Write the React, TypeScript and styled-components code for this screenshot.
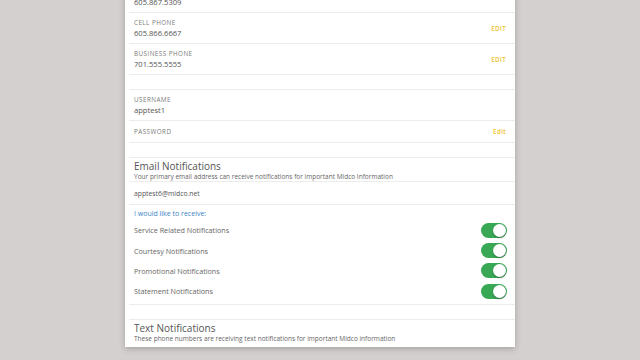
import styled, { createGlobalStyle } from 'styled-components'

const GlobalStyle = createGlobalStyle`
  html, body {
    margin: 0;
    padding: 0;
    background: #d4d0cf;
    height: 360px;
    overflow: hidden;
  }
  body {
    font-family: 'Open Sans', 'Liberation Sans', sans-serif;
  }
`

type Field = { label: string; value?: string; edit?: string }

const phoneFields: Field[] = [
  { label: 'HOME PHONE', value: '605.867.5309' },
  { label: 'CELL PHONE', value: '605.866.6667', edit: 'EDIT' },
  { label: 'BUSINESS PHONE', value: '701.555.5555', edit: 'EDIT' },
]

const loginFields: Field[] = [
  { label: 'USERNAME', value: 'apptest1' },
  { label: 'PASSWORD', edit: 'Edit' },
]

const notifications = [
  'Service Related Notifications',
  'Courtesy Notifications',
  'Promotional Notifications',
  'Statement Notifications',
]

export default function App() {
  return (
    <>
      <GlobalStyle />
      <Page>
        <Panel>
          {phoneFields.map((f) => (
            <FieldRow key={f.label}>
              <FieldText>
                <Label>{f.label}</Label>
                <Value>{f.value}</Value>
              </FieldText>
              {f.edit && <EditLink>{f.edit}</EditLink>}
            </FieldRow>
          ))}
          <Spacer />
          {loginFields.map((f) => (
            <FieldRow key={f.label} short={!f.value}>
              <FieldText>
                <Label>{f.label}</Label>
                {f.value && <Value>{f.value}</Value>}
              </FieldText>
              {f.edit && <EditLink>{f.edit}</EditLink>}
            </FieldRow>
          ))}
          <Spacer />

          <SectionHead>
            <Heading>Email Notifications</Heading>
            <SubText>Your primary email address can receive notifications for important Midco Information</SubText>
          </SectionHead>
          <EmailRow>apptest6@midco.net</EmailRow>

          <Prefs>
            <Prompt>I would like to receive:</Prompt>
            {notifications.map((n) => (
              <PrefRow key={n}>
                <PrefName>{n}</PrefName>
                <Toggle on />
              </PrefRow>
            ))}
          </Prefs>
          <Spacer />

          <SectionHead last>
            <Heading>Text Notifications</Heading>
            <SubText>These phone numbers are receiving text notifications for important Midco information</SubText>
          </SectionHead>
        </Panel>
      </Page>
    </>
  )
}

const Page = styled.div`
  display: flex;
  justify-content: center;
  align-items: flex-start;
`

const Panel = styled.div`
  width: 390px;
  margin-top: -18px;
  background: #fff;
  box-shadow: 0 2px 6px rgba(0, 0, 0, 0.22);
  display: flex;
  flex-direction: column;
`

const Divided = styled.div`
  margin-left: 4px;
  padding-left: 5px;
  border-bottom: 1px solid #ececec;
`

const FieldRow = styled(Divided)<{ short?: boolean }>`
  height: ${(p) => (p.short ? 21 : 30)}px;
  display: flex;
  align-items: center;
  padding-right: 9px;
`

const FieldText = styled.div`
  flex: 1;
  display: flex;
  flex-direction: column;
  gap: 1px;
`

const Label = styled.div`
  font-size: 6.3px;
  letter-spacing: 0.45px;
  color: #7a7a7a;
  line-height: 9px;
`

const Value = styled.div`
  font-size: 7.6px;
  color: #555;
  line-height: 10px;
`

const EditLink = styled.span`
  font-size: 6.3px;
  font-weight: 600;
  color: #efc232;
  letter-spacing: 0.3px;
`

const Spacer = styled(Divided)`
  height: 14px;
`

const SectionHead = styled(Divided)<{ last?: boolean }>`
  padding-top: 2px;
  padding-bottom: ${(p) => (p.last ? 3 : 0)}px;
  border-bottom-color: ${(p) => (p.last ? 'transparent' : '#ececec')};
`

const Heading = styled.div`
  font-size: 10px;
  color: #555;
  line-height: 13px;
`

const SubText = styled.div`
  font-size: 6.5px;
  color: #666;
  line-height: 8px;
  white-space: nowrap;
`

const EmailRow = styled(Divided)`
  height: 22px;
  display: flex;
  align-items: center;
  font-size: 6.8px;
  color: #555;
`

const Prefs = styled(Divided)`
  padding-top: 4px;
  padding-right: 8px;
  padding-bottom: 2px;
  display: flex;
  flex-direction: column;
`

const Prompt = styled.div`
  font-size: 7px;
  color: #3d83c4;
  line-height: 10px;
  margin-bottom: 1px;
`

const PrefRow = styled.div`
  height: 20.4px;
  display: flex;
  align-items: center;
`

const PrefName = styled.div`
  flex: 1;
  font-size: 7.2px;
  color: #666;
`

const Toggle = styled.span<{ on?: boolean }>`
  width: 26px;
  height: 15px;
  border-radius: 8px;
  background: ${(p) => (p.on ? '#38a855' : '#ddd')};
  position: relative;
  &::after {
    content: '';
    position: absolute;
    top: 1px;
    right: 1px;
    width: 13px;
    height: 13px;
    border-radius: 50%;
    background: #fff;
    box-shadow: 0 1px 1.5px rgba(0, 0, 0, 0.35);
  }
`
